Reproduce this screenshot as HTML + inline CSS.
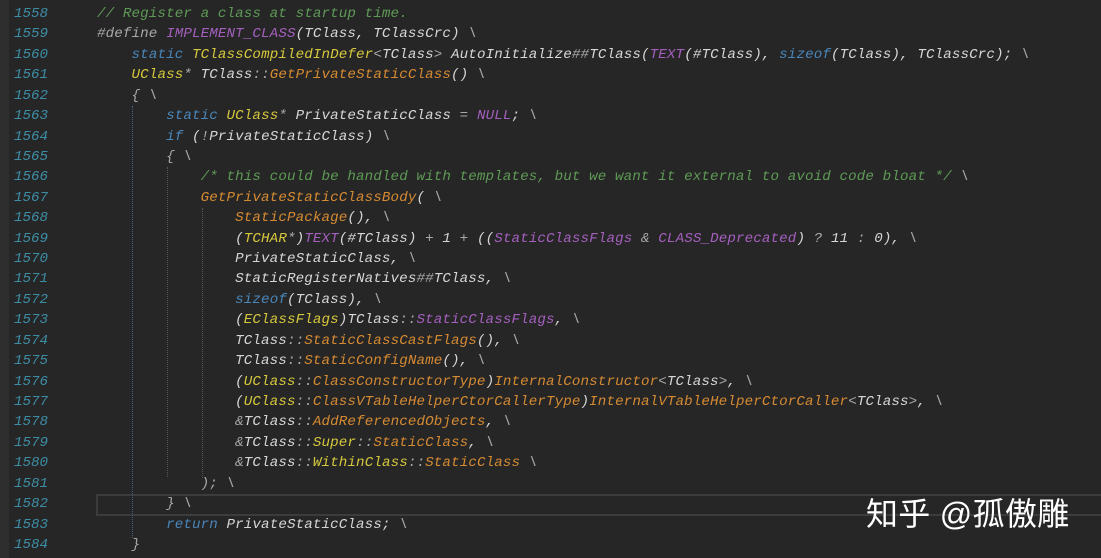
<!DOCTYPE html>
<html><head><meta charset="utf-8"><style>
html,body{margin:0;padding:0;}
body{width:1101px;height:558px;background:#262627;overflow:hidden;position:relative;font-family:"Liberation Mono",monospace;}
.gut{position:absolute;left:0;top:0;width:9px;height:558px;background:#2e2e2f;}
.ln{position:absolute;left:14px;width:40px;font-size:14.2px;font-style:italic;color:#3d8ea5;line-height:20.42px;}
.cd{position:absolute;left:97px;font-size:14.2px;letter-spacing:0.12px;font-style:italic;color:#d6d6d6;line-height:20.42px;white-space:pre;}
.c{color:#5e9a55}.k{color:#4a86b8}.m{color:#a45fbd}.t{color:#d6c83c}.f{color:#d58a32}.p{color:#a8a8a8}
.g{position:absolute;width:0;border-left:1px dotted #555;}
.hl{position:absolute;left:96px;top:494px;width:1010px;height:18px;border:2px solid #3c3c3c;}
.wm{position:absolute;left:866px;top:489px;font-size:32px;color:#fff;font-family:"Liberation Sans","Noto Sans CJK SC",sans-serif;letter-spacing:0.3px;}
</style></head><body>
<div class="gut"></div>
<div class="hl"></div>
<div class="g" style="left:132px;top:106px;height:432px;border-left-color:#4a5a8a"></div>
<div class="g" style="left:167px;top:167px;height:310px"></div>
<div class="g" style="left:202px;top:208px;height:270px"></div>
<div class="ln" style="top:4px">1558<br>1559<br>1560<br>1561<br>1562<br>1563<br>1564<br>1565<br>1566<br>1567<br>1568<br>1569<br>1570<br>1571<br>1572<br>1573<br>1574<br>1575<br>1576<br>1577<br>1578<br>1579<br>1580<br>1581<br>1582<br>1583<br>1584</div>
<div class="cd" style="top:4px"><span class="c">// Register a class at startup time.</span>
<span class="p">#define</span> <span class="m">IMPLEMENT_CLASS</span>(TClass, TClassCrc) <span class="p">\</span>
    <span class="k">static</span> <span class="t">TClassCompiledInDefer</span><span class="p">&lt;</span>TClass<span class="p">&gt;</span> AutoInitialize<span class="p">##</span>TClass(<span class="m">TEXT</span>(#TClass), <span class="k">sizeof</span>(TClass), TClassCrc); <span class="p">\</span>
    <span class="t">UClass</span><span class="p">*</span> TClass<span class="p">::</span><span class="f">GetPrivateStaticClass</span>() <span class="p">\</span>
    <span class="p">{ \</span>
        <span class="k">static</span> <span class="t">UClass</span><span class="p">*</span> PrivateStaticClass <span class="p">=</span> <span class="m">NULL</span>; <span class="p">\</span>
        <span class="k">if</span> (<span class="p">!</span>PrivateStaticClass) <span class="p">\</span>
        <span class="p">{ \</span>
            <span class="c">/* this could be handled with templates, but we want it external to avoid code bloat */</span> <span class="p">\</span>
            <span class="f">GetPrivateStaticClassBody</span>( <span class="p">\</span>
                <span class="f">StaticPackage</span>(), <span class="p">\</span>
                (<span class="t">TCHAR</span><span class="p">*</span>)<span class="m">TEXT</span>(#TClass) <span class="p">+</span> 1 <span class="p">+</span> ((<span class="m">StaticClassFlags</span> <span class="p">&amp;</span> <span class="m">CLASS_Deprecated</span>) <span class="p">?</span> 11 <span class="p">:</span> 0), <span class="p">\</span>
                PrivateStaticClass, <span class="p">\</span>
                StaticRegisterNatives<span class="p">##</span>TClass, <span class="p">\</span>
                <span class="k">sizeof</span>(TClass), <span class="p">\</span>
                (<span class="t">EClassFlags</span>)TClass<span class="p">::</span><span class="m">StaticClassFlags</span>, <span class="p">\</span>
                TClass<span class="p">::</span><span class="f">StaticClassCastFlags</span>(), <span class="p">\</span>
                TClass<span class="p">::</span><span class="f">StaticConfigName</span>(), <span class="p">\</span>
                (<span class="t">UClass</span><span class="p">::</span><span class="f">ClassConstructorType</span>)<span class="f">InternalConstructor</span><span class="p">&lt;</span>TClass<span class="p">&gt;</span>, <span class="p">\</span>
                (<span class="t">UClass</span><span class="p">::</span><span class="f">ClassVTableHelperCtorCallerType</span>)<span class="f">InternalVTableHelperCtorCaller</span><span class="p">&lt;</span>TClass<span class="p">&gt;</span>, <span class="p">\</span>
                <span class="p">&amp;</span>TClass<span class="p">::</span><span class="f">AddReferencedObjects</span>, <span class="p">\</span>
                <span class="p">&amp;</span>TClass<span class="p">::</span><span class="t">Super</span><span class="p">::</span><span class="f">StaticClass</span>, <span class="p">\</span>
                <span class="p">&amp;</span>TClass<span class="p">::</span><span class="t">WithinClass</span><span class="p">::</span><span class="f">StaticClass</span> <span class="p">\</span>
            <span class="p">); \</span>
        <span class="p">} \</span>
        <span class="k">return</span> PrivateStaticClass; <span class="p">\</span>
    <span class="p">}</span></div>
<div class="wm">知乎 @孤傲雕</div>
</body></html>
